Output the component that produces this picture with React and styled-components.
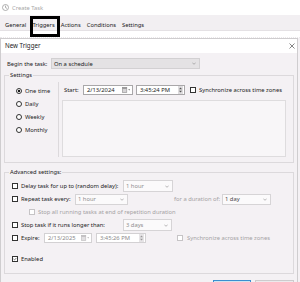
import styled, { createGlobalStyle } from "styled-components";

const GlobalStyle = createGlobalStyle`
  html, body { margin: 0; padding: 0; }
  body {
    font-family: "Noto Sans", "Open Sans", sans-serif;
    font-size: 5.8px;
    line-height: 8px;
    color: #1b1b1b;
    background: #f4f1f4;
  }
`;

const Page = styled.div`
  width: 300px;
  height: 282px;
  overflow: hidden;
  display: flex;
  flex-direction: column;
`;

const WindowTitle = styled.div`
  height: 15px;
  flex: none;
  background: #fff;
  display: flex;
  align-items: center;
  gap: 3px;
  padding-left: 2px;
  color: #a8a8a8;
`;

const TabStrip = styled.div`
  height: 16px;
  flex: none;
  box-sizing: border-box;
  display: flex;
  align-items: center;
  gap: 6px;
  padding: 4px 0 0 5px;
  background: #f2eff2;
  border-bottom: 1px solid #e4e1e4;
`;

const Tab = styled.span`
  position: relative;
  white-space: nowrap;
`;

const Highlight = styled.span`
  position: absolute;
  left: -2px;
  right: -5px;
  top: -5px;
  bottom: -8px;
  border: 3px solid #000;
  z-index: 2;
`;

const GhostStrip = styled.div`
  height: 7px;
  flex: none;
  background: #fff;
  border-bottom: 1px dotted #ebe9eb;
  box-sizing: border-box;
`;

const Dialog = styled.div`
  flex: 1;
  width: 298px;
  box-sizing: border-box;
  display: flex;
  flex-direction: column;
  border: 1px solid #cfcdcf;
  border-bottom: none;
  background: #f4f1f4;
`;

const DialogTitle = styled.div`
  height: 14px;
  flex: none;
  background: #fff;
  display: flex;
  align-items: center;
  justify-content: space-between;
  padding: 0 2px 0 4px;
  font-size: 6.2px;
  color: #1b1b1b;
`;

const DialogBody = styled.div`
  padding: 5px 3px 0;
  display: flex;
  flex-direction: column;
`;

const BeginRow = styled.div`
  display: flex;
  align-items: center;
  height: 11px;
`;

const Label = styled.span`
  flex: none;
  white-space: nowrap;
  width: ${(p) => (p.$w ? `${p.$w}px` : "auto")};
  margin-left: ${(p) => p.$ml || 0}px;
  color: ${(p) => (p.$disabled ? "#a4a2a4" : "inherit")};
`;

const Select = styled.div`
  flex: none;
  width: ${(p) => p.$w}px;
  height: ${(p) => p.$h || 11}px;
  box-sizing: border-box;
  display: flex;
  align-items: center;
  justify-content: space-between;
  padding: 0 3px 0 2px;
  margin-left: ${(p) => p.$ml || 0}px;
  border: 1px solid ${(p) => (p.$gray ? "#d2d0d2" : "#d6d4d6")};
  background: ${(p) => (p.$gray ? "#e4e2e4" : "#fbfafb")};
  color: ${(p) => p.$color || "#1b1b1b"};
`;

const GroupBox = styled.fieldset`
  margin: ${(p) => p.$mt || 0}px 0 0;
  padding: 0;
  min-width: 0;
  border: 1px solid #dcd9dc;
`;

const Legend = styled.legend`
  margin-left: 4px;
  padding: 0 1px;
  line-height: 8px;
`;

const SettingsGrid = styled.div`
  display: grid;
  grid-template-columns: 54px 1fr;
  padding: 3px 0 5px;
`;

const RadioColumn = styled.div`
  border-right: 1px solid #dcd9dc;
  padding: 3px 0 0 11px;
  display: flex;
  flex-direction: column;
`;

const RadioRow = styled.label`
  height: 12.8px;
  display: flex;
  align-items: center;
  gap: 3px;
`;

const Radio = styled.span`
  flex: none;
  width: 6px;
  height: 6px;
  box-sizing: border-box;
  border-radius: 50%;
  border: 1px solid #333;
  background: ${(p) =>
    p.$on ? "radial-gradient(circle, #1b1b1b 0 1.3px, #fff 1.6px)" : "#fff"};
`;

const ScheduleColumn = styled.div`
  padding: 3px 7px 0 3px;
  display: flex;
  flex-direction: column;
`;

const FieldRow = styled.div`
  display: flex;
  align-items: center;
  height: 10px;
`;

const InputBox = styled.div`
  flex: none;
  width: ${(p) => p.$w}px;
  height: 10px;
  box-sizing: border-box;
  display: flex;
  align-items: center;
  justify-content: space-between;
  padding: 0 1px 0 3px;
  margin-left: ${(p) => p.$ml || 0}px;
  border: 1px solid ${(p) => (p.$disabled ? "#d3d1d3" : "#a9a7a9")};
  background: #fff;
  color: ${(p) => (p.$disabled ? "#8a888a" : "#1b1b1b")};
`;

const Panel = styled.div`
  height: 57px;
  box-sizing: border-box;
  margin-top: 5px;
  border: 1px solid #dedcde;
  background: #f8f6f8;
`;

const AdvancedBody = styled.div`
  padding: 3.5px 0 7.5px 7px;
  display: flex;
  flex-direction: column;
`;

const OptionRow = styled.div`
  height: 13px;
  display: flex;
  align-items: center;
  padding-left: ${(p) => p.$indent || 0}px;
  margin-top: ${(p) => p.$mt || 0}px;
`;

const Check = styled.span`
  flex: none;
  width: 6px;
  height: 6px;
  box-sizing: border-box;
  margin: 0 3px 0 ${(p) => p.$ml || 0}px;
  border: 1px solid ${(p) => (p.$disabled ? "#c6c4c6" : "#333")};
  background: #fff;
  display: flex;
  align-items: center;
  justify-content: center;
`;

const ButtonRow = styled.div`
  display: flex;
  justify-content: flex-end;
  gap: 4px;
  margin-top: 6px;
`;

const Button = styled.div`
  width: ${(p) => p.$w}px;
  height: 14px;
  box-sizing: border-box;
  border: 1px solid ${(p) => (p.$primary ? "#3a8fd0" : "#cdcbcd")};
  background: ${(p) => (p.$primary ? "#cfe3ef" : "#eceaec")};
`;

const Chevron = () => (
  <svg width="4" height="3" viewBox="0 0 4 3">
    <path d="M0.3 0.6 L2 2.3 L3.7 0.6" fill="none" stroke="#8a888a" strokeWidth="0.6" />
  </svg>
);

const Calendar = ({ muted }) => (
  <svg width="9" height="6" viewBox="0 0 9 6">
    <rect x="0.4" y="0.4" width="4.4" height="5.2" fill={muted ? "#e2e0e2" : "#d6d4d6"} stroke={muted ? "#bdbbbd" : "#8f8d8f"} strokeWidth="0.6" />
    <rect x="0.4" y="0.4" width="4.4" height="1.4" fill={muted ? "#bdbbbd" : "#8f8d8f"} />
    <path d="M6.2 2.3 L8.2 2.3 L7.2 3.5 Z" fill={muted ? "#b0aeb0" : "#6a686a"} />
  </svg>
);

const Spinner = ({ muted }) => (
  <svg width="5" height="8" viewBox="0 0 5 8">
    <rect x="0" y="0" width="5" height="8" fill={muted ? "#e6e4e6" : "#dedcde"} />
    <path d="M1 3.2 L2.5 1.6 L4 3.2 Z M1 4.8 L2.5 6.4 L4 4.8 Z" fill={muted ? "#9a989a" : "#555"} />
  </svg>
);

const Tick = () => (
  <svg width="5" height="4" viewBox="0 0 5 4">
    <path d="M0.6 2 L1.9 3.2 L4.4 0.6" fill="none" stroke="#1b1b1b" strokeWidth="0.7" />
  </svg>
);

const TaskIcon = () => (
  <svg width="7" height="7" viewBox="0 0 7 7">
    <circle cx="3.5" cy="3.5" r="3" fill="#fff" stroke="#9a9a9a" strokeWidth="0.8" />
    <path d="M3.5 1.6 L3.5 3.6 L5 4.4" fill="none" stroke="#8a8a8a" strokeWidth="0.7" />
  </svg>
);

const CloseX = () => (
  <svg width="6" height="6" viewBox="0 0 6 6">
    <path d="M0.5 0.5 L5.5 5.5 M5.5 0.5 L0.5 5.5" stroke="#333" strokeWidth="0.6" />
  </svg>
);

export default function App() {
  return (
    <Page>
      <GlobalStyle />
      <WindowTitle>
        <TaskIcon />
        <span>Create Task</span>
      </WindowTitle>
      <TabStrip>
        <Tab>General</Tab>
        <Tab>
          Triggers
          <Highlight />
        </Tab>
        <Tab>Actions</Tab>
        <Tab>Conditions</Tab>
        <Tab>Settings</Tab>
      </TabStrip>
      <GhostStrip />
      <Dialog>
        <DialogTitle>
          <span>New Trigger</span>
          <CloseX />
        </DialogTitle>
        <DialogBody>
          <BeginRow>
            <Label $w={44} $ml={3}>Begin the task:</Label>
            <Select $w={149} $gray>
              <span>On a schedule</span>
              <Chevron />
            </Select>
          </BeginRow>

          <GroupBox $mt={2}>
            <Legend>Settings</Legend>
            <SettingsGrid>
              <RadioColumn>
                <RadioRow><Radio $on />One time</RadioRow>
                <RadioRow><Radio />Daily</RadioRow>
                <RadioRow><Radio />Weekly</RadioRow>
                <RadioRow><Radio />Monthly</RadioRow>
              </RadioColumn>
              <ScheduleColumn>
                <FieldRow>
                  <Label $w={19} $ml={2}>Start:</Label>
                  <InputBox $w={50}>
                    <span>2/13/2024</span>
                    <Calendar />
                  </InputBox>
                  <InputBox $w={49} $ml={3}>
                    <span>3:45:24 PM</span>
                    <Spinner />
                  </InputBox>
                  <Check $ml={5} />
                  <Label>Synchronize across time zones</Label>
                </FieldRow>
                <Panel />
              </ScheduleColumn>
            </SettingsGrid>
          </GroupBox>

          <GroupBox $mt={5}>
            <Legend>Advanced settings:</Legend>
            <AdvancedBody>
              <OptionRow>
                <Check />
                <Label $w={102}>Delay task for up to (random delay):</Label>
                <Select $w={50} $h={12} $color="#8f8d8f">
                  <span>1 hour</span>
                  <Chevron />
                </Select>
              </OptionRow>
              <OptionRow>
                <Check />
                <Label $w={54}>Repeat task every:</Label>
                <Select $w={53} $color="#8f8d8f">
                  <span>1 hour</span>
                  <Chevron />
                </Select>
                <Label $w={48} $ml={46} $disabled>for a duration of:</Label>
                <Select $w={49} $color="#4a484a">
                  <span>1 day</span>
                  <Chevron />
                </Select>
              </OptionRow>
              <OptionRow $indent={17}>
                <Check $disabled />
                <Label $disabled>Stop all running tasks at end of repetition duration</Label>
              </OptionRow>
              <OptionRow>
                <Check />
                <Label $w={102}>Stop task if it runs longer than:</Label>
                <Select $w={49} $h={12} $color="#8f8d8f">
                  <span>3 days</span>
                  <Chevron />
                </Select>
              </OptionRow>
              <OptionRow>
                <Check />
                <Label $w={23}>Expire:</Label>
                <InputBox $w={48} $disabled>
                  <span>2/13/2025</span>
                  <Calendar muted />
                </InputBox>
                <InputBox $w={50} $ml={4} $disabled>
                  <span>3:45:26 PM</span>
                  <Spinner muted />
                </InputBox>
                <Check $ml={31} $disabled />
                <Label $ml={1} $disabled>Synchronize across time zones</Label>
              </OptionRow>
              <OptionRow $mt={8}>
                <Check>
                  <Tick />
                </Check>
                <Label>Enabled</Label>
              </OptionRow>
            </AdvancedBody>
          </GroupBox>

          <ButtonRow>
            <Button $w={38} $primary />
            <Button $w={39} />
          </ButtonRow>
        </DialogBody>
      </Dialog>
    </Page>
  );
}
